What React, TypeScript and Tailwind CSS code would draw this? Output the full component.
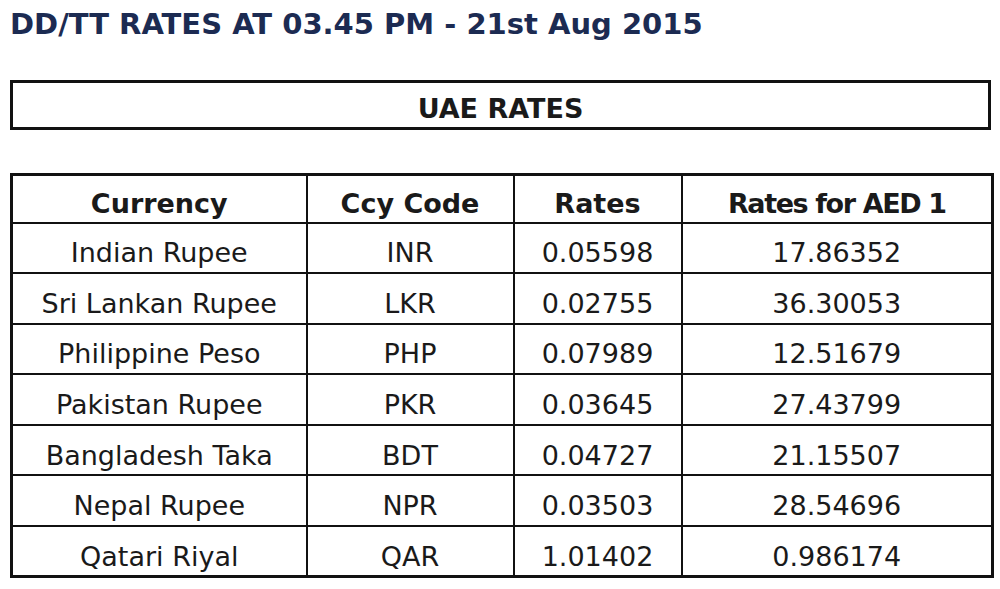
import React from "react";

const rows: [string, string, string, string][] = [
  ["Indian Rupee", "INR", "0.05598", "17.86352"],
  ["Sri Lankan Rupee", "LKR", "0.02755", "36.30053"],
  ["Philippine Peso", "PHP", "0.07989", "12.51679"],
  ["Pakistan Rupee", "PKR", "0.03645", "27.43799"],
  ["Bangladesh Taka", "BDT", "0.04727", "21.15507"],
  ["Nepal Rupee", "NPR", "0.03503", "28.54696"],
  ["Qatari Riyal", "QAR", "1.01402", "0.986174"],
];

export default function App() {
  return (
    <div className="w-[1000px] h-[589px] bg-white pl-[10px] overflow-hidden" style={{ fontFamily: '"DejaVu Sans", sans-serif' }}>
      <h1 className="pt-[7px] text-[29px] leading-[34px] font-bold text-[#1c2b52] whitespace-nowrap">
        DD/TT RATES AT 03.45 PM - 21st Aug 2015
      </h1>
      <div className="mt-[39px] w-[981px] h-[50px] border-[3px] border-[#111] flex items-center justify-center pt-[6px]">
        <span className="text-[27px] font-bold text-[#1a1a1a] leading-[31px]">UAE RATES</span>
      </div>
      <table className="mt-[43px] w-[981px] border-collapse border-[3px] border-[#111] table-fixed text-[#1a1a1a]">
        <colgroup>
          <col className="w-[295px]" />
          <col className="w-[207px]" />
          <col className="w-[168px]" />
          <col className="w-[311px]" />
        </colgroup>
        <thead>
          <tr className="h-[48px]">
            <th className="border-2 border-[#111] text-[27px] font-bold leading-[31px] pt-[9px] pb-0 align-middle">Currency</th>
            <th className="border-2 border-[#111] text-[27px] font-bold leading-[31px] pt-[9px] pb-0 align-middle">Ccy Code</th>
            <th className="border-2 border-[#111] text-[27px] font-bold leading-[31px] pt-[9px] pb-0 align-middle">Rates</th>
            <th className="border-2 border-[#111] text-[27px] font-bold leading-[31px] pt-[9px] pb-0 align-middle tracking-[-1.4px]">Rates for AED 1</th>
          </tr>
        </thead>
        <tbody>
          {rows.map((r) => (
            <tr key={r[1]} className="h-[50.6px]">
              {r.map((c, i) => (
                <td key={i} className="border-2 border-[#111] text-center text-[27px] leading-[31px] pt-[10px] pb-0 align-middle whitespace-nowrap">
                  {c}
                </td>
              ))}
            </tr>
          ))}
        </tbody>
      </table>
    </div>
  );
}
